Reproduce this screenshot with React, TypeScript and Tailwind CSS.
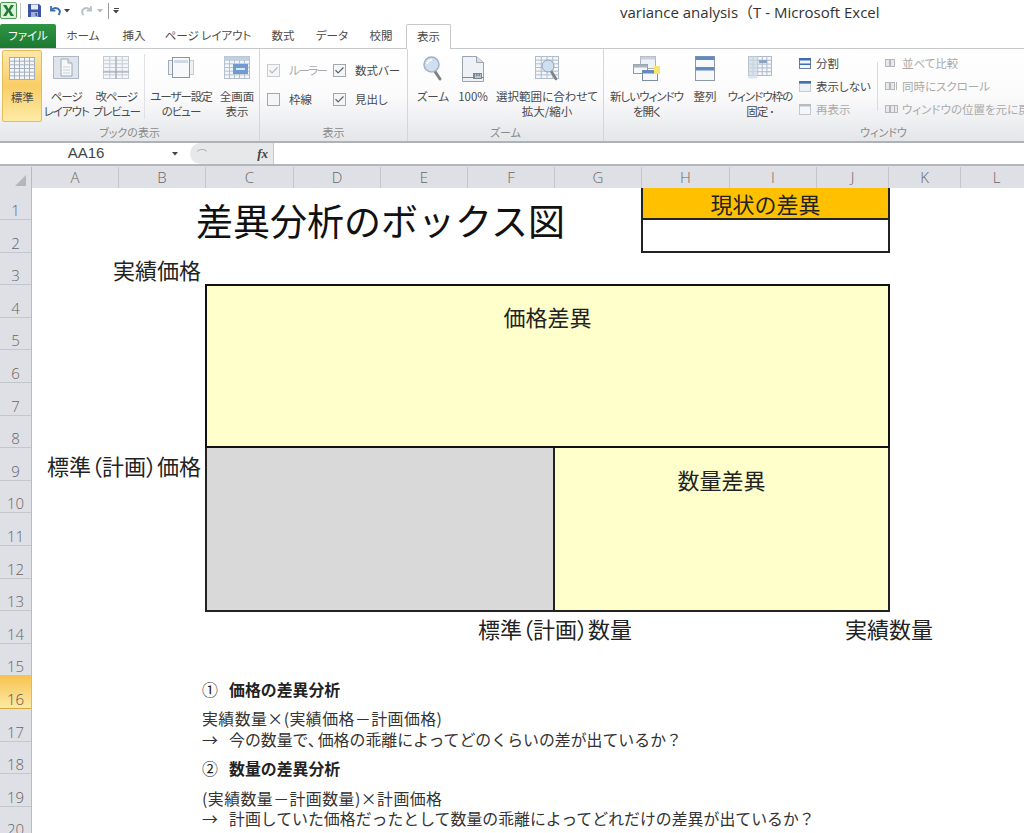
import { Check } from "lucide-react";

const COLUMNS = ["A", "B", "C", "D", "E", "F", "G", "H", "I", "J", "K", "L", "M"];
const ROWS = Array.from({ length: 20 }, (_, i) => i + 1);
const COL_TEMPLATE = "grid grid-cols-[87px_87px_88px_87px_87px_87px_87px_88px_87px_72px_72px_72px_72px]";

function ExcelLogo() {
  return (
    <svg width="17" height="17" viewBox="0 0 17 17">
      <rect x="0.5" y="0.5" width="16" height="16" rx="1.5" fill="#dcefd8" stroke="#4f9a57" />
      <path d="M3 3h3.4L8.6 7l2.2-4H14l-3.6 5.6L14 14h-3.3l-2.2-4-2.2 4H3l3.6-5.4z" fill="#1f7a36" />
    </svg>
  );
}

function SaveIcon() {
  return (
    <svg width="13" height="13" viewBox="0 0 13 13">
      <path d="M0 0h11l2 2v11H0z" fill="#3c54a8" />
      <rect x="3" y="0.5" width="7" height="5" fill="#e6edf7" />
      <rect x="3" y="8" width="7" height="5" fill="#9fb0d6" />
      <rect x="7.5" y="9" width="1.5" height="3" fill="#3c54a8" />
    </svg>
  );
}

function ArrowIcon({ color, flip }: { color: string; flip?: boolean }) {
  return (
    <svg width="11" height="11" viewBox="0 0 11 11" className={flip ? "-scale-x-100" : ""}>
      <path d="M1 1v4.6h4.4" fill="none" stroke={color} strokeWidth="1.8" />
      <path d="M1.4 5.2C3.4 2.4 7.6 2 9.4 5c.8 1.6.4 3.4-.8 5" fill="none" stroke={color} strokeWidth="2" />
    </svg>
  );
}

function Caret({ color = "#444" }: { color?: string }) {
  return (
    <svg width="6" height="4" viewBox="0 0 6 4">
      <path d="M0 0h6L3 3.5z" fill={color} />
    </svg>
  );
}

function SheetGrid({ x, y, w, h, cols, rows, stroke = "#b4bdc9" }: { x: number; y: number; w: number; h: number; cols: number; rows: number; stroke?: string }) {
  return (
    <g stroke={stroke} strokeWidth="1" fill="none">
      <rect x={x} y={y} width={w} height={h} fill="#f4f6f9" />
      {Array.from({ length: cols - 1 }, (_, i) => (
        <line key={"c" + i} x1={x + ((i + 1) * w) / cols} y1={y} x2={x + ((i + 1) * w) / cols} y2={y + h} />
      ))}
      {Array.from({ length: rows - 1 }, (_, i) => (
        <line key={"r" + i} x1={x} y1={y + ((i + 1) * h) / rows} x2={x + w} y2={y + ((i + 1) * h) / rows} />
      ))}
    </g>
  );
}

function NormalIcon() {
  return (
    <svg width="26" height="24" viewBox="0 0 26 24">
      <SheetGrid x={0.5} y={0.5} w={25} h={22} cols={5} rows={6} stroke="#a3afbd" />
    </svg>
  );
}

function PageLayoutIcon() {
  return (
    <svg width="26" height="24" viewBox="0 0 26 24">
      <rect x="0.5" y="0.5" width="25" height="22" fill="#dfe5ed" stroke="#aeb8c4" />
      <path d="M8 3h7l4 4v13H8z" fill="#f6f7f9" stroke="#a0a9b5" />
      <path d="M15 3v4h4" fill="#e6e9ee" stroke="#a0a9b5" />
      <path d="M10 11h7M10 14h7M10 17h7" stroke="#ccd2da" />
    </svg>
  );
}

function BreakIcon() {
  return (
    <svg width="26" height="24" viewBox="0 0 26 24">
      <SheetGrid x={0.5} y={0.5} w={25} h={22} cols={4} rows={6} stroke="#c6ccd4" />
      <path d="M13 0v23M0 16h26" stroke="#98a2af" strokeWidth="1" />
    </svg>
  );
}

function CustomViewIcon() {
  return (
    <svg width="26" height="24" viewBox="0 0 26 24">
      <rect x="0.5" y="4.5" width="4" height="14" fill="#eef0f3" stroke="#a2abb6" />
      <rect x="21.5" y="4.5" width="4" height="14" fill="#eef0f3" stroke="#c6ccd3" />
      <rect x="4.5" y="1.5" width="17" height="20" fill="#f7f8fa" stroke="#8a95a2" />
      <rect x="6" y="4" width="14" height="3" fill="#cfd9e6" />
    </svg>
  );
}

function FullScreenIcon() {
  return (
    <svg width="26" height="24" viewBox="0 0 26 24">
      <SheetGrid x={0.5} y={0.5} w={25} h={22} cols={5} rows={6} stroke="#b4c0cf" />
      <rect x="0.5" y="0.5" width="25" height="4" fill="#c2cfdf" />
      <rect x="9" y="8" width="15" height="10" fill="#6f9bd2" />
      <rect x="12" y="12" width="9" height="2" fill="#dbe7f6" />
    </svg>
  );
}

function MagnifierIcon() {
  return (
    <svg width="20" height="26" viewBox="0 0 20 26">
      <path d="M11 14l6 9" stroke="#808080" strokeWidth="3" strokeLinecap="round" />
      <circle cx="8.5" cy="8.5" r="7.5" fill="#cfdfef" stroke="#a0b2c5" strokeWidth="1.5" />
      <path d="M4 8a5 5 0 0 1 5-4" stroke="#fff" strokeWidth="1.5" fill="none" />
    </svg>
  );
}

function HundredIcon() {
  return (
    <svg width="22" height="26" viewBox="0 0 22 26">
      <path d="M0.5 0.5h14l7 6v19H.5z" fill="#eef1f5" stroke="#9aa3ae" />
      <path d="M14.5 0.5v6h7" fill="#d8dee6" stroke="#9aa3ae" />
      <rect x="0" y="21" width="22" height="1" fill="#808a96" />
      <rect x="11" y="17" width="9" height="6" fill="#7d8793" />
      <path d="M13 19h1M15.5 19h1M18 19h1M13 21h6" stroke="#fff" />
    </svg>
  );
}

function ZoomSelectionIcon() {
  return (
    <svg width="24" height="26" viewBox="0 0 24 26">
      <SheetGrid x={0.5} y={0.5} w={23} h={22} cols={4} rows={6} stroke="#b0bdcc" />
      <path d="M16 15l5 8" stroke="#808080" strokeWidth="2.6" strokeLinecap="round" />
      <circle cx="13" cy="10" r="6" fill="#cfdfef" stroke="#8fa3b8" />
    </svg>
  );
}

function NewWindowIcon() {
  return (
    <svg width="28" height="26" viewBox="0 0 28 26">
      <rect x="7.5" y="0.5" width="15" height="12" fill="#eef1f5" stroke="#a8b1bc" />
      <rect x="7.5" y="0.5" width="15" height="3" fill="#c9d0d9" />
      <rect x="0.5" y="8.5" width="14" height="9" fill="#f7f8fa" stroke="#8f99a6" />
      <rect x="0.5" y="8.5" width="14" height="3" fill="#a8b3c0" />
      <rect x="9.5" y="14.5" width="15" height="10" fill="#f7f8fa" stroke="#7d8da3" />
      <rect x="9.5" y="14.5" width="15" height="3" fill="#5f8ac4" />
      <rect x="21" y="10" width="6" height="8" fill="#f6e670" />
    </svg>
  );
}

function ArrangeIcon() {
  return (
    <svg width="20" height="25" viewBox="0 0 20 25">
      <rect x="0.5" y="0.5" width="19" height="24" fill="#f7f8fa" stroke="#8f99a6" />
      <rect x="0.5" y="0.5" width="19" height="3.5" fill="#5f8ac4" />
      <rect x="0.5" y="11" width="19" height="3.5" fill="#5f8ac4" />
    </svg>
  );
}

function FreezeIcon() {
  return (
    <svg width="24" height="24" viewBox="0 0 24 24">
      <SheetGrid x={0.5} y={0.5} w={23} h={19} cols={5} rows={5} stroke="#afbccb" />
      <rect x="0.5" y="0.5" width="9" height="22" fill="#cfdae7" opacity="0.7" />
      <rect x="11" y="4" width="8" height="3" fill="#8aa3c2" />
    </svg>
  );
}

function SmallWin({ kind, muted }: { kind: "split" | "hide" | "show"; muted?: boolean }) {
  const bar = muted ? "#b8bcc2" : "#3f6fb0";
  const line = muted ? "#c4c7cb" : "#6d7f98";
  return (
    <svg width="12" height="11" viewBox="0 0 12 11" className="shrink-0">
      {kind !== "hide" && <rect x="0.5" y="0.5" width="11" height="10" fill="#f4f6f9" stroke={line} />}
      {kind === "hide" && <rect x="0.5" y="2.5" width="11" height="8" fill="#eef1f5" stroke="#c8ccd2" />}
      <rect x="0" y="0" width="12" height="2.5" fill={bar} />
      {kind === "split" && <rect x="0" y="5.5" width="12" height="1.5" fill={bar} />}
    </svg>
  );
}

function SideIcon({ kind }: { kind: "compare" | "sync" | "reset" }) {
  return (
    <svg width="13" height="10" viewBox="0 0 13 10" className="shrink-0">
      <rect x="0.5" y="1.5" width="4" height="7" fill="#e7e9ec" stroke="#b4b7bc" />
      <rect x="5.5" y="1.5" width="4" height="7" fill="#e7e9ec" stroke="#b4b7bc" />
      {kind === "sync" && <path d="M11.5 1v8" stroke="#b4b7bc" />}
      {kind === "reset" && <rect x="9.5" y="1.5" width="3" height="7" fill="#e7e9ec" stroke="#b4b7bc" />}
    </svg>
  );
}

function CheckBox({ checked, muted }: { checked?: boolean; muted?: boolean }) {
  return (
    <span className={`flex h-[13px] w-[13px] shrink-0 items-center justify-center border bg-[#f4f5f7] ${muted ? "border-[#c9cbce]" : "border-[#a3a6aa]"}`}>
      {checked && <Check size={11} strokeWidth={2.5} className={muted ? "text-[#b5b7ba]" : "text-[#5a5e63]"} />}
    </span>
  );
}

function BigButton({ width, icon, lines, active, narrow }: { width: string; icon: React.ReactNode; lines: string[]; active?: boolean; narrow?: boolean }) {
  return (
    <div className={`flex h-[72px] shrink-0 flex-col items-center rounded-[2px] ${width} ${active ? "border border-[#e3bd5c] bg-gradient-to-b from-[#fde7a8] via-[#f9cd66] to-[#fdeba6]" : ""}`}>
      <div className="flex h-[39px] items-start justify-center pt-[6px]">{icon}</div>
      {lines.map((line) => (
        <div key={line} className={`whitespace-nowrap text-[11.5px] leading-[15px] text-[#4a4a4a] [font-feature-settings:'palt'] ${narrow ? "tracking-[-1px]" : ""}`}>
          {line}
        </div>
      ))}
    </div>
  );
}

function RibbonGroup({ width, label, children }: { width: string; label: string; children: React.ReactNode }) {
  return (
    <div className={`flex shrink-0 flex-col border-r border-[#d3d6da] ${width}`}>
      <div className="flex h-[74px] pt-[1px]">{children}</div>
      <div className="flex flex-1 items-center justify-center pt-[1px] text-[11px] text-[#8a8a8a] [font-feature-settings:'palt']">{label}</div>
    </div>
  );
}

function TitleBar() {
  return (
    <div className="flex h-[24px] shrink-0 items-start bg-white">
      <div className="flex items-center pt-[2px]">
        <ExcelLogo />
        <div className="ml-[3px] h-[16px] w-px bg-[#c4c4c4]" />
        <div className="ml-[7px]"><SaveIcon /></div>
        <div className="ml-[9px]"><ArrowIcon color="#3f6fb0" /></div>
        <div className="ml-[3px]"><Caret /></div>
        <div className="ml-[11px]"><ArrowIcon color="#b9c2cc" flip /></div>
        <div className="ml-[5px]"><Caret color="#bbb" /></div>
        <div className="ml-[5px] h-[16px] w-px bg-[#999]" />
        <div className="ml-[4px] flex flex-col items-center gap-[1px]">
          <div className="h-px w-[5px] bg-[#444]" />
          <Caret />
        </div>
      </div>
      <div className="ml-[501px] whitespace-nowrap pt-[3px] font-['Open_Sans','Noto_Sans_CJK_JP',sans-serif] text-[15px] leading-[18px] text-[#333]">
        variance analysis（T - Microsoft Excel
      </div>
    </div>
  );
}

function Tabs() {
  const tabs = [
    { label: "ホーム", w: "w-[54px]" },
    { label: "挿入", w: "w-[48px]" },
    { label: "ページ レイアウト", w: "w-[100px]" },
    { label: "数式", w: "w-[50px]" },
    { label: "データ", w: "w-[48px]" },
    { label: "校閲", w: "w-[50px]" },
  ];
  return (
    <div className="flex h-[25px] shrink-0 border-b border-[#c6c8cc] bg-white text-[11.5px] text-[#4a4a4a] [font-feature-settings:'palt']">
      <div className="flex w-[56px] items-center justify-center rounded-t-[2px] bg-gradient-to-b from-[#2f9444] to-[#1c7a30] text-white">ファイル</div>
      {tabs.map((tab) => (
        <div key={tab.label} className={`flex items-center justify-center ${tab.w}`}>
          {tab.label}
        </div>
      ))}
      <div className="flex h-[25px] w-[45px] items-center justify-center rounded-t-[2px] border-x border-t border-[#c6c8cc] bg-white">表示</div>
    </div>
  );
}

function Ribbon() {
  return (
    <div className="flex h-[94px] shrink-0 overflow-hidden border-b-2 border-[#aeb1b6] bg-gradient-to-b from-white via-[#fbfbfc] to-[#e4e6e9]">
      <RibbonGroup width="w-[260px]" label="ブックの表示">
        <div className="w-[3px]" />
        <BigButton width="w-[40px]" active icon={<NormalIcon />} lines={["標準"]} />
        <BigButton width="w-[48px]" narrow icon={<PageLayoutIcon />} lines={["ページ", "レイアウト"]} />
        <BigButton width="w-[52px]" narrow icon={<BreakIcon />} lines={["改ページ", "プレビュー"]} />
        <div className="mx-[2px] my-[4px] w-px bg-[#dfe1e4]" />
        <BigButton width="w-[68px]" narrow icon={<CustomViewIcon />} lines={["ユーザー設定", "のビュー"]} />
        <BigButton width="w-[44px]" icon={<FullScreenIcon />} lines={["全画面", "表示"]} />
      </RibbonGroup>

      <RibbonGroup width="w-[148px]" label="表示">
        <div className="flex w-[73px] shrink-0 flex-col gap-[16px] whitespace-nowrap pl-[7px] pt-[14px] text-[11.5px] leading-[13px] text-[#4a4a4a] [font-feature-settings:'palt']">
          <div className="flex items-center gap-[9px] tracking-[-1.5px] text-[#aaa]"><CheckBox checked muted />ルーラー</div>
          <div className="flex items-center gap-[9px]"><CheckBox />枠線</div>
        </div>
        <div className="flex flex-col gap-[16px] whitespace-nowrap pt-[14px] text-[11.5px] leading-[13px] text-[#4a4a4a] [font-feature-settings:'palt']">
          <div className="flex items-center gap-[9px]"><CheckBox checked />数式バー</div>
          <div className="flex items-center gap-[9px]"><CheckBox checked />見出し</div>
        </div>
      </RibbonGroup>

      <RibbonGroup width="w-[196px]" label="ズーム">
        <div className="w-[5px]" />
        <BigButton width="w-[40px]" icon={<MagnifierIcon />} lines={["ズーム"]} />
        <BigButton width="w-[40px]" icon={<HundredIcon />} lines={["100%"]} />
        <BigButton width="w-[108px]" icon={<ZoomSelectionIcon />} lines={["選択範囲に合わせて", "拡大/縮小"]} />
      </RibbonGroup>

      <RibbonGroup width="w-[560px]" label="ウィンドウ">
        <div className="w-[4px]" />
        <BigButton width="w-[77px]" narrow icon={<NewWindowIcon />} lines={["新しいウィンドウ", "を開く"]} />
        <div className="w-[3px]" />
        <BigButton width="w-[34px]" icon={<ArrangeIcon />} lines={["整列"]} />
        <div className="w-[2px]" />
        <BigButton width="w-[72px]" narrow icon={<FreezeIcon />} lines={["ウィンドウ枠の", "固定 ･"]} />
        <div className="flex w-[81px] shrink-0 flex-col gap-[9px] whitespace-nowrap pl-[3px] pt-[6px] text-[11.5px] leading-[14px] text-[#4a4a4a] [font-feature-settings:'palt']">
          <div className="flex items-center gap-[5px]"><SmallWin kind="split" />分割</div>
          <div className="flex items-center gap-[5px]"><SmallWin kind="hide" />表示しない</div>
          <div className="flex items-center gap-[5px] text-[#aaa]"><SmallWin kind="show" muted />再表示</div>
        </div>
        <div className="my-[12px] w-px shrink-0 bg-[#d9dbde]" />
        <div className="flex flex-col gap-[9px] whitespace-nowrap pl-[7px] pt-[6px] text-[11.5px] leading-[14px] text-[#aaa] [font-feature-settings:'palt']">
          <div className="flex items-center gap-[4px]"><SideIcon kind="compare" />並べて比較</div>
          <div className="flex items-center gap-[4px]"><SideIcon kind="sync" />同時にスクロール</div>
          <div className="flex items-center gap-[4px]"><SideIcon kind="reset" />ウィンドウの位置を元に戻す</div>
        </div>
      </RibbonGroup>
    </div>
  );
}

function FormulaBar() {
  return (
    <div className="flex h-[23px] shrink-0 items-stretch border-b-2 border-[#b4b6ba] bg-white">
      <div className="flex w-[190px] items-center">
        <span className="w-[172px] text-center font-['Liberation_Sans',sans-serif] text-[15px] text-[#444]">AA16</span>
        <Caret />
      </div>
      <div className="flex w-[84px] items-center justify-between rounded-l-full border-r border-[#c9cbcf] bg-[#e6e8ea] pl-[7px] pr-[5px]">
        <span className="text-[10px] leading-none text-[#aaa]">⌒</span>
        <span className="font-['Liberation_Serif',serif] text-[13px] font-bold italic text-[#444]">fx</span>
      </div>
    </div>
  );
}

function ColumnHeader() {
  return (
    <div className="flex h-[21.5px] shrink-0 bg-[#dee0e5] pt-px">
      <div className="flex w-[32px] shrink-0 items-end justify-end border-r border-[#b7bac0] pb-[2px] pr-[5px]">
        <svg width="11" height="11" viewBox="0 0 11 11">
          <path d="M11 0v11H0z" fill="#b3b6bb" />
        </svg>
      </div>
      <div className={COL_TEMPLATE}>
        {COLUMNS.map((col) => (
          <div key={col} className="flex items-center justify-center border-r border-[#c3c6cb] font-['Open_Sans',sans-serif] text-[15px] font-light leading-none text-[#666]">
            {col}
          </div>
        ))}
      </div>
    </div>
  );
}

function RowHeader() {
  return (
    <div className="flex w-[32px] shrink-0 flex-col border-r border-[#b7bac0] bg-[#dee0e5]">
      {ROWS.map((row) => (
        <div
          key={row}
          className={`flex h-[32.6px] shrink-0 items-end justify-center border-b font-['Open_Sans',sans-serif] text-[15px] font-light leading-[18px] ${
            row === 16 ? "border-[#d9a93a] bg-gradient-to-b from-[#f7c34f] to-[#fde9a2] text-[#555]" : "border-[#c3c6cb] text-[#666]"
          }`}
        >
          {row}
        </div>
      ))}
    </div>
  );
}

function Sheet() {
  return (
    <div className={`${COL_TEMPLATE} grid-rows-[repeat(20,32.6px)] bg-white text-[22px] leading-none text-[#222]`}>
      <div className="col-start-2 col-span-8 row-start-1 row-span-2 flex items-center whitespace-nowrap pl-[77px] text-[37px] text-[#111]">
        差異分析のボックス図
      </div>

      <div className="col-start-8 col-span-3 row-start-1 -mx-px flex items-center justify-center border-x-2 border-b-2 border-[#222] bg-[#ffc000]">
        現状の差異
      </div>
      <div className="col-start-8 col-span-3 row-start-2 -mx-px border-x-2 border-b-2 border-[#222]" />

      <div className="col-start-1 col-span-2 row-start-3 flex items-center justify-end whitespace-nowrap pr-[5px]">実績価格</div>

      <div className="col-start-3 col-span-8 row-start-4 row-span-5 -mx-px -mt-px flex justify-center border-2 border-[#111] bg-[#ffffcc] pt-[19px]">価格差異</div>

      <div className="col-start-1 col-span-2 row-start-9 flex items-center justify-end whitespace-nowrap pr-[5px] pt-px [font-feature-settings:'palt']">標準（計画）価格</div>

      <div className="col-start-3 col-span-4 row-start-9 row-span-5 -ml-px -mb-px border-x-2 border-b-2 border-[#222] bg-[#d9d9d9]" />
      <div className="col-start-7 col-span-4 row-start-9 row-span-5 -mr-px -mb-px flex justify-center border-r-2 border-b-2 border-[#222] bg-[#ffffcc] pt-[20px]">数量差異</div>

      <div className="col-start-6 col-span-4 row-start-14 flex items-center whitespace-nowrap pl-[10px] [font-feature-settings:'palt']">標準（計画）数量</div>
      <div className="col-start-10 col-span-2 row-start-14 flex items-center justify-center whitespace-nowrap">実績数量</div>

      <div className="col-start-3 col-span-10 row-start-16 row-span-5 -ml-[4px] flex flex-col whitespace-nowrap pt-[4px] text-[15.9px] leading-[20px] text-[#333]">
        <div className="flex font-bold text-[#222]">
          <span className="w-[27px] font-normal">①</span>価格の差異分析
        </div>
        <div className="mt-[9px] tracking-[0.45px]">実績数量×(実績価格－計画価格)</div>
        <div className="mt-px flex">
          <span className="w-[27px]">→</span>
          <span className="-mr-[6px]">今の数量で、</span>
          <span>価格の乖離によってどのくらいの差が出ているか？</span>
        </div>
        <div className="mt-[9px] flex font-bold text-[#222]">
          <span className="w-[27px] font-normal">②</span>数量の差異分析
        </div>
        <div className="mt-[10px] tracking-[0.45px]">(実績数量－計画数量)×計画価格</div>
        <div className="flex">
          <span className="w-[27px]">→</span>計画していた価格だったとして数量の乖離によってどれだけの差異が出ているか？
        </div>
      </div>
    </div>
  );
}

export default function App() {
  return (
    <div className="relative flex h-[833px] w-[1024px] flex-col overflow-hidden bg-white font-['Noto_Sans_CJK_JP','Noto_Sans',sans-serif]">
      <TitleBar />
      <Tabs />
      <Ribbon />
      <FormulaBar />
      <ColumnHeader />
      <div className="flex flex-1">
        <RowHeader />
        <Sheet />
      </div>
    </div>
  );
}
